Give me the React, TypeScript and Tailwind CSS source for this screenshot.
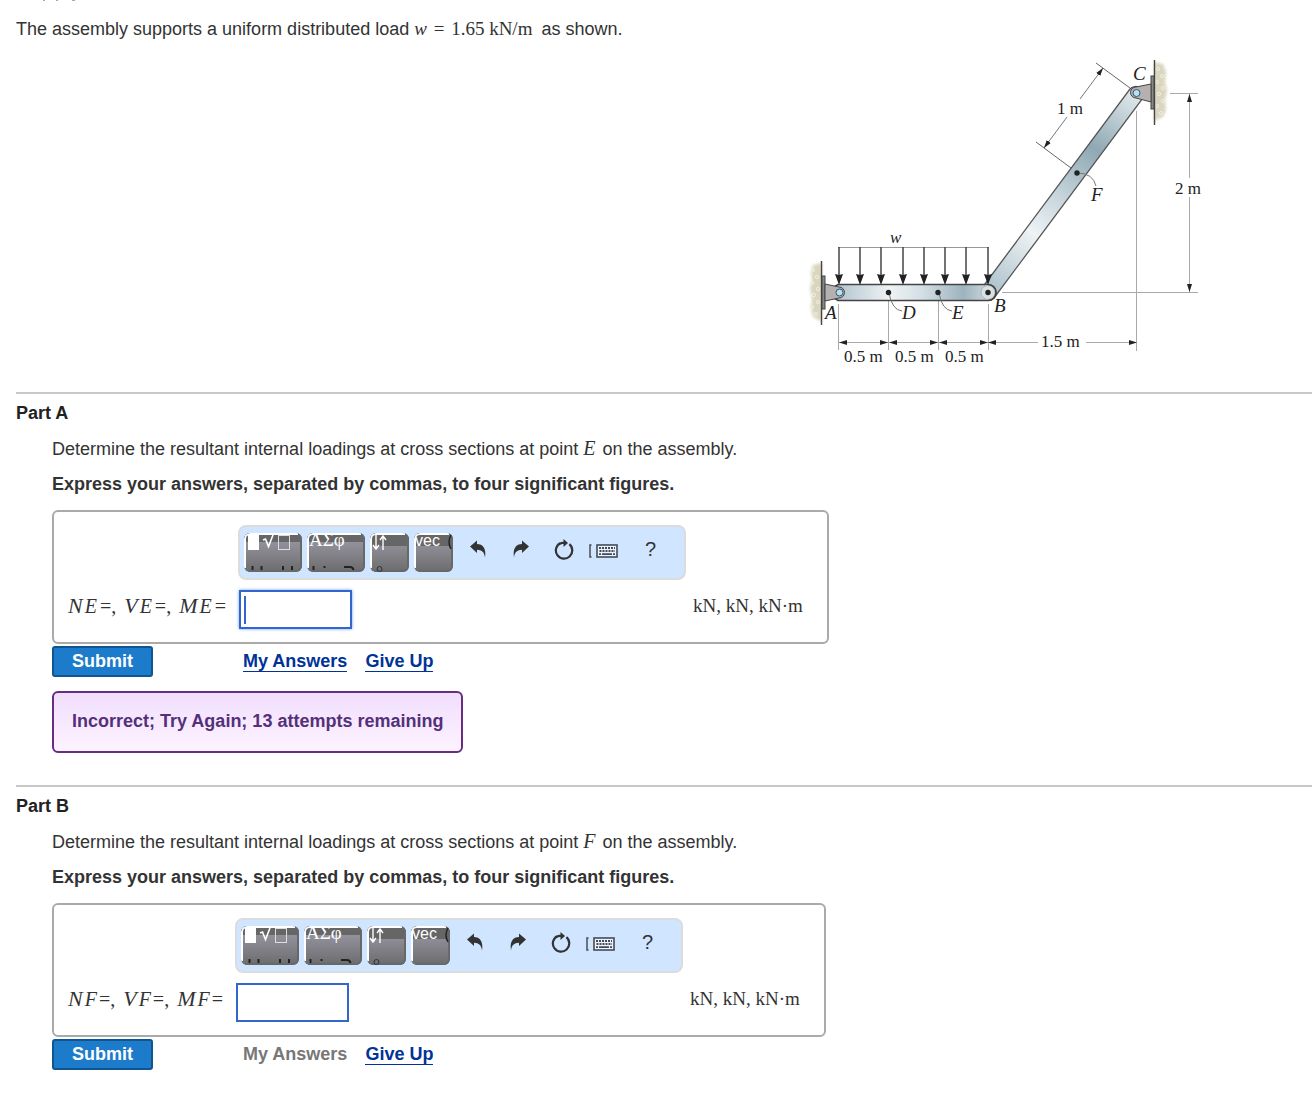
import type { ReactNode } from "react";

const UndoIcon = () => (
  <svg width="16" height="18" viewBox="0 0 16 18" className="fill-[#333]">
    <path d="M0 6.5 L7 0.5 V4 C12.5 4 16.5 8 15 17.5 C14.5 12.5 12 10 7 9.8 V13 Z" />
  </svg>
);

const RedoIcon = () => (
  <svg width="16" height="18" viewBox="0 0 16 18" className="fill-[#333]">
    <path d="M16 6.5 L9 0.5 V4 C3.5 4 -0.5 8 1 17.5 C1.5 12.5 4 10 9 9.8 V13 Z" />
  </svg>
);

const ResetIcon = () => (
  <svg width="20" height="21" viewBox="0 0 20 21">
    <path d="M6.2 4.2 A8.2 8.2 0 1 0 15.4 5.2" fill="none" stroke="#333" strokeWidth="2.2" />
    <path d="M4.5 4.6 C6.5 3 8 2.8 9.5 2.8 V0 L14 4 L9.5 8 V5 C8 5 7 5.2 5.5 6 Z" fill="#333" />
  </svg>
);

const KeyboardIcon = () => (
  <svg width="33" height="14" viewBox="0 0 33 14">
    <path d="M3.5 1 H2 V13 H3.5" fill="none" stroke="#444" strokeWidth="1.4" />
    <rect x="9" y="1" width="20" height="12" fill="#eaf3ff" stroke="#444b55" strokeWidth="1.6" />
    <path d="M11 4 H27 M11.5 7 H27" stroke="#444b55" strokeWidth="2" strokeDasharray="2 1" />
    <path d="M11 10.2 H13 M14 10.2 H24 M25 10.2 H27" stroke="#444b55" strokeWidth="1.8" />
  </svg>
);

type PaletteButtonProps = { label: string; width: number; band: number; children: ReactNode };

const PaletteButton = ({ label, width, band, children }: PaletteButtonProps) => (
  <button type="button" aria-label={label} className="block shrink-0 overflow-hidden rounded-md">
    <svg width={width} height="39" viewBox={`0 0 ${width} 39`} className="block">
      <rect width={width} height="39" fill="url(#paletteFill)" />
      <rect width={width} height={band} fill="#666" />
      <path d={`M${width - 1} 4 V33 Q${width - 1} 38 ${width - 6} 38 H4`} fill="none" stroke="#686868" strokeWidth="2" />
      <path d={`M1 35 V6 Q1 1 6 1 H${width - 4}`} fill="none" stroke="#fff" strokeWidth="2" />
      {children}
    </svg>
  </button>
);

const Toolbar = () => (
  <div className="flex h-[55px] w-[448px] items-start rounded-lg border-2 border-[#dcdcdc] bg-[#d0e5ff] pt-1.5 pl-1">
    <div className="flex items-start gap-[5px]">
      <PaletteButton label="Templates" width={58} band={9}>
        <rect x="4" y="2" width="11" height="15" fill="#fff" />
        <path d="M19 7 L21.5 6 L24.5 13.5 L29 2" fill="none" stroke="#fff" strokeWidth="1.6" />
        <rect x="34.5" y="2.5" width="11" height="14" fill="none" stroke="#ddd" />
        <path d="M8.5 33 V37 M17.5 33 V37 M39 33 V37 M48 33 V37" stroke="#222" strokeWidth="2" />
      </PaletteButton>
      <PaletteButton label="Symbols" width={58} band={9}>
        <text x="2" y="13" fontSize="19" fill="#fff" className="font-['Liberation_Serif',serif]">ΑΣφ</text>
        <path d="M6.5 33 V37 M16.5 34 H18.5 M37 34 H43 Q46 34 46.5 37" fill="none" stroke="#222" strokeWidth="2" />
      </PaletteButton>
      <PaletteButton label="Relations" width={39} band={13}>
        <path d="M6 2 V16 M3 12 L6 16 L9 12 M13 17 V3 M10 7 L13 3 L16 7" fill="none" stroke="#fff" strokeWidth="1.4" />
        <circle cx="9.5" cy="36" r="2.5" fill="none" stroke="#333" />
      </PaletteButton>
      <PaletteButton label="Vectors" width={39} band={13}>
        <text x="1" y="13" fontSize="16" fill="#fff" className="font-['Liberation_Sans',sans-serif]">vec</text>
        <path d="M37 2 Q33 9 37 16" fill="none" stroke="#222" strokeWidth="1.5" />
      </PaletteButton>
    </div>
    <div className="ml-1 flex h-8">
      <button type="button" aria-label="Undo" className="flex w-[43px] items-center justify-center"><UndoIcon /></button>
      <button type="button" aria-label="Redo" className="flex w-[43px] items-center justify-center"><RedoIcon /></button>
      <button type="button" aria-label="Reset" className="flex w-[43px] items-center justify-center"><ResetIcon /></button>
      <button type="button" aria-label="Keyboard shortcuts" className="flex w-[37px] items-center justify-center pt-1"><KeyboardIcon /></button>
      <button type="button" aria-label="Help" className="ml-1.5 w-[43px] text-xl text-[#333]">?</button>
    </div>
  </div>
);

type PartProps = { id: string; point: string; focused?: boolean; attempted?: boolean };

const Part = ({ id, point, focused, attempted }: PartProps) => (
  <section className="border-t-2 border-[#c8c8c8] pt-[7px]">
    <h2 className="font-bold text-[#222]">Part {id}</h2>
    <div className="pl-9">
      <p className="mt-3">
        Determine the resultant internal loadings at cross sections at point{" "}
        <i className="mr-0.5 font-['Liberation_Serif',serif] text-[20px] leading-none">{point}</i> on the assembly.
      </p>
      <p className="mt-[11px] font-bold">Express your answers, separated by commas, to four significant figures.</p>

      <div className="mt-3.5 grid w-fit grid-cols-[auto_auto_auto] gap-y-2.5 rounded-md border-2 border-[#aaa] py-[13px] pr-6 pl-3.5">
        <div className="col-start-2">
          <Toolbar />
        </div>
        <label
          htmlFor={`answer-${id}`}
          className="row-start-2 flex items-baseline pt-1 pr-3 font-['Liberation_Serif',serif] text-[20px] leading-6"
        >
          {["N", "V", "M"].map((name, i) => (
            <span key={name} className={i < 2 ? "mr-2" : ""}>
              <i className="text-[22px] leading-none">{name}</i>
              <i className="ml-0.5">{point}</i>
              <span className={point === "E" ? "ml-[3px]" : "ml-0.5"}>=</span>
              {i < 2 && ","}
            </span>
          ))}
        </label>
        <div className="relative row-start-2 pl-px">
          <input
            id={`answer-${id}`}
            type="text"
            className={
              focused
                ? "block h-[39px] w-[113px] border-2 border-[#3366cc] shadow-[0_0_3px_#6c9cf0] outline-none"
                : "block h-[39px] w-[113px] border-2 border-[#3366cc] outline-none"
            }
          />
          {focused && <span className="absolute top-1.5 left-1.5 h-7 w-0.5 bg-[#3366cc]" />}
        </div>
        <div className="row-start-2 pt-1 pl-[7px] font-['Liberation_Serif',serif] text-[19px] leading-6">kN, kN, kN·m</div>
      </div>

      <div className="mt-0.5 flex items-center font-bold">
        <button type="button" className="h-[31px] w-[101px] rounded-[3px] border-2 border-[#0f5590] bg-[#1c7ccb] pb-0.5 leading-none text-white">
          Submit
        </button>
        <div className="ml-[90px] flex gap-[18px] leading-5">
          {attempted ? (
            <a href="#answers" className="border-b border-[#003399] text-[#003399]">My Answers</a>
          ) : (
            <span className="text-[#777]">My Answers</span>
          )}
          <a href="#give-up" className="border-b border-[#003399] text-[#003399]">Give Up</a>
        </div>
      </div>

      {attempted && (
        <div className="mt-3.5 mb-8 flex h-[62px] w-fit items-center rounded-md border-2 border-[#662d82] bg-linear-to-b from-[#f1defd] to-[#fdf3ff] px-[18px] pb-0.5 font-bold text-[#54307a]">
          Incorrect; Try Again; 13 attempts remaining
        </div>
      )}
    </div>
  </section>
);

const loadArrows = [839, 860, 881, 903, 924, 945, 966, 988];
const wallSpots = [[4, 6], [8, 13], [3, 19], [9, 25], [5, 31], [9, 38], [3, 43], [7, 50]];

const Figure = () => (
  <svg width="412" height="320" viewBox="800 50 412 320" className="block font-['Liberation_Serif',serif]" role="img" aria-label="Assembly diagram">
    <defs>
      <linearGradient id="beamFill">
        <stop offset="0" stopColor="#abc0ca" />
        <stop offset="0.35" stopColor="#eff3f4" />
        <stop offset="0.55" stopColor="#d3dfe4" />
        <stop offset="0.8" stopColor="#9eb3be" />
        <stop offset="1" stopColor="#d9e3e8" />
      </linearGradient>
      <linearGradient id="strutFill" gradientUnits="userSpaceOnUse" x1="988" y1="293" x2="1136" y2="93">
        <stop offset="0" stopColor="#a9bfc9" />
        <stop offset="0.3" stopColor="#eef3f5" />
        <stop offset="0.5" stopColor="#c3d2d9" />
        <stop offset="0.72" stopColor="#8fa8b3" />
        <stop offset="1" stopColor="#e1eaed" />
      </linearGradient>
      <filter id="soft"><feGaussianBlur stdDeviation="1.5" /></filter>
      <marker id="tip" viewBox="0 0 8 6" refX="8" refY="3" markerWidth="8" markerHeight="6" markerUnits="userSpaceOnUse" orient="auto-start-reverse">
        <path d="M0 0.5 L8 3 L0 5.5 Z" fill="#222" />
      </marker>
    </defs>

    {/* walls */}
    <path d="M822 263 L813 265 L811 272 L812 280 L810 288 L812 298 L811 308 L813 317 L822 322 Z" fill="#d9d5bf" filter="url(#soft)" />
    <path d="M1154 62 L1163 64 L1166 72 L1165 82 L1167 91 L1165 100 L1166 110 L1163 117 L1154 121 Z" fill="#d9d5bf" filter="url(#soft)" />
    {wallSpots.map(([x, y]) => (
      <g key={`${x}-${y}`} fill="none" stroke="#f4f2e6" strokeWidth="0.8">
        <circle cx={809 + x} cy={264 + y} r="1.6" />
        <circle cx={1154 + x} cy={63 + y} r="1.6" />
      </g>
    ))}
    <path d="M821.5 261 V325 M1154.5 60 V125" stroke="#444" strokeWidth="1.4" />

    {/* extension and dimension lines */}
    <g stroke="#aaa" strokeWidth="1" fill="none">
      <path d="M838.5 304 V350 M888.5 300 V350 M938.5 300 V350 M988.5 304 V350 M1136.5 111 V351" />
      <path d="M1002 292.5 H1198 M1170 93.5 H1198" />
      <path d="M1096 63 L1130 88 M1036 142 L1071 168" stroke="#666" />
      <path d="M1189.5 197 V292" markerEnd="url(#tip)" />
      <path d="M1189.5 178 V94" markerEnd="url(#tip)" />
      <path d="M839 342.5 H888" markerStart="url(#tip)" markerEnd="url(#tip)" />
      <path d="M889 342.5 H938" markerStart="url(#tip)" markerEnd="url(#tip)" />
      <path d="M939 342.5 H988" markerStart="url(#tip)" markerEnd="url(#tip)" />
      <path d="M1038 342.5 H988" markerEnd="url(#tip)" />
      <path d="M1086 342.5 H1137" markerEnd="url(#tip)" />
      <path d="M1080 99 L1103 68" stroke="#777" markerEnd="url(#tip)" />
      <path d="M1067 117 L1044 148" stroke="#777" markerEnd="url(#tip)" />
    </g>

    {/* inclined member */}
    <path d="M982 288 L1130 89 A8 8 0 0 1 1143 98 L994 298 Z" fill="url(#strutFill)" stroke="#555" strokeWidth="1.3" />

    {/* beam */}
    <path d="M838 284.5 H988 A8 8 0 0 1 988 300.5 H838 L832 297 V288 Z" fill="url(#beamFill)" stroke="#444" strokeWidth="1.5" />
    <circle cx="988" cy="292.5" r="7" fill="#d9e1e5" stroke="#aab4b8" />
    <path d="M988 284.5 A8 8 0 0 1 988 300.5" fill="none" stroke="#444" strokeWidth="1.5" />

    {/* distributed load */}
    <path d="M838 247.5 H989" stroke="#999" />
    {loadArrows.map((x) => (
      <g key={x}>
        <path d={`M${x} 247 V276`} stroke="#444" strokeWidth="1.5" />
        <path d={`M${x - 4} 274 L${x} 275 L${x + 4} 274 L${x} 285 Z`} fill="#222" />
      </g>
    ))}

    {/* pin supports */}
    <rect x="822" y="276" width="3" height="33" fill="#888" stroke="#444" />
    <path d="M825 284 L839 287 A5.5 5.5 0 0 1 839 298 L825 301 Z" fill="#b6b1b1" stroke="#444" />
    <circle cx="839.5" cy="292.5" r="3.5" fill="#b6e0f3" stroke="#32596e" />
    <rect x="1151" y="76" width="3" height="33" fill="#888" stroke="#444" />
    <path d="M1151 84 L1136 87 A5.5 5.5 0 0 0 1136 98 L1151 102 Z" fill="#b6b1b1" stroke="#444" />
    <circle cx="1136.5" cy="93" r="3.5" fill="#b6e0f3" stroke="#32596e" />

    {/* section points */}
    <path d="M889 293 Q892 310 902 311 M939 293 Q942 310 952 311 M1077 173 Q1093 173 1096 186" fill="none" stroke="#777" />
    <g fill="#222">
      <circle cx="888.5" cy="292.5" r="2.7" />
      <circle cx="938" cy="292.5" r="2.7" />
      <circle cx="988" cy="292.5" r="2.7" />
      <circle cx="1077" cy="173" r="2.7" />
    </g>

    <g fontSize="19" fontStyle="italic" fill="#222">
      <text x="890" y="243" fontSize="17">w</text>
      <text x="825" y="319">A</text>
      <text x="902" y="319">D</text>
      <text x="952" y="319">E</text>
      <text x="994" y="312">B</text>
      <text x="1091" y="201">F</text>
      <text x="1133" y="80">C</text>
    </g>
    <g fontSize="17" fill="#222">
      <text x="844" y="362">0.5 m</text>
      <text x="895" y="362">0.5 m</text>
      <text x="945" y="362">0.5 m</text>
      <text x="1041" y="347">1.5 m</text>
      <text x="1057" y="114">1 m</text>
      <text x="1175" y="194">2 m</text>
    </g>
  </svg>
);

export default function App() {
  return (
    <main className="relative min-h-screen bg-white pt-[17px] pb-12 pl-4 font-['Liberation_Sans',Arial,sans-serif] text-lg leading-6 text-[#333]">
      <svg width="32" height="1" viewBox="0 0 32 1" className="absolute top-0 left-[43px]" aria-hidden="true">
        <path d="M0 0.5 H2 M13 0.5 H15 M29 0.5 H32" stroke="#aaa" />
      </svg>
      <svg width="0" height="0" className="absolute" aria-hidden="true">
        <linearGradient id="paletteFill" x1="0" y1="0" x2="0" y2="1">
          <stop offset="0.25" stopColor="#92919b" />
          <stop offset="1" stopColor="#6c6c6e" />
        </linearGradient>
      </svg>

      <p>
        The assembly supports a uniform distributed load{" "}
        <span className="mr-1 font-['Liberation_Serif',serif] text-[19px] leading-none">
          <i>w</i> <span className="mx-0.5">=</span> 1.65 kN/m
        </span>{" "}
        as shown.
      </p>
      <div className="mt-[9px] mb-[22px] flex justify-end pr-[100px]">
        <Figure />
      </div>

      <Part id="A" point="E" focused attempted />
      <Part id="B" point="F" />
    </main>
  );
}
